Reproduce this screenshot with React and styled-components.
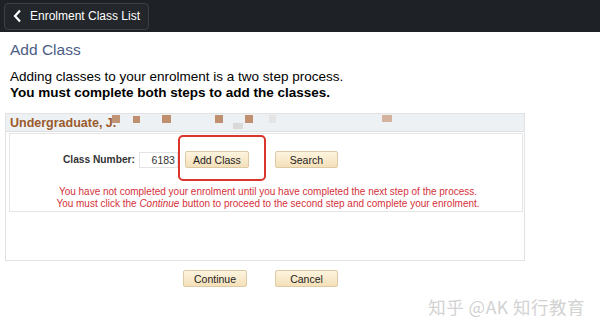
import React from "react";
import styled, { createGlobalStyle } from "styled-components";

const GlobalStyle = createGlobalStyle`
  body {
    margin: 0;
    background: #ffffff;
    font-family: "Liberation Sans", Arial, sans-serif;
  }
`;

const Page = styled.div`
  width: 600px;
  height: 332px;
  overflow: hidden;
  background: #fff;
`;

const TopBar = styled.div`
  height: 32px;
  background: #1e2226;
  display: flex;
  align-items: center;
  padding: 0 4px;
  box-sizing: border-box;
`;

const BackButton = styled.button`
  height: 27px;
  width: 145px;
  display: flex;
  align-items: center;
  gap: 8px;
  padding: 0 0 0 8px;
  background: #23272b;
  border: 1px solid #3c4146;
  border-radius: 4px;
  color: #fff;
  font-family: "Liberation Sans", Arial, sans-serif;
  font-size: 12px;
  white-space: nowrap;
`;

const Title = styled.h1`
  margin: 8px 0 0 10px;
  font-size: 15.5px;
  line-height: 20px;
  font-weight: normal;
  color: #4b5d86;
`;

const Intro = styled.p`
  margin: 9px 0 0 10px;
  font-size: 13.5px;
  line-height: 16px;
  color: #000;
`;

const Strong = styled.strong`
  display: block;
`;

const GroupBox = styled.div`
  margin: 12px 0 0 5px;
  width: 520px;
  height: 148px;
  border: 1px solid #e2e2e2;
  box-sizing: border-box;
`;

const GroupHeader = styled.div`
  position: relative;
  height: 18px;
  background: #eef1f3;
  border-bottom: 1px solid #dde0e2;
  box-sizing: border-box;
  padding-left: 4px;
  font-size: 12.5px;
  line-height: 18px;
  font-weight: bold;
  color: #9a5a2c;
`;

const Mosaic = styled.span`
  position: absolute;
  top: ${(p) => p.top}px;
  left: ${(p) => p.left}px;
  width: ${(p) => p.w}px;
  height: ${(p) => p.h}px;
  background: ${(p) => p.color};
`;

const InnerBox = styled.div`
  margin: 1px 1px 0 3px;
  height: 79px;
  border: 1px solid #e6e6e6;
  box-sizing: border-box;
  padding-top: 17px;
`;

const FormRow = styled.div`
  display: flex;
  align-items: center;
  height: 17px;
  padding-left: 53px;
`;

const Label = styled.span`
  font-size: 10.2px;
  font-weight: bold;
  color: #333;
  margin-right: 4px;
`;

const Input = styled.div`
  width: 39px;
  height: 16px;
  box-sizing: border-box;
  border: 1px solid #e4e4e4;
  font-size: 10.5px;
  line-height: 14px;
  text-align: right;
  padding-right: 2px;
  color: #333;
  margin-right: ${(p) => p.gap}px;
`;

const Highlight = styled.span`
  position: relative;
  display: inline-flex;
  margin-right: 26px;
  &::after {
    content: "";
    position: absolute;
    left: -7px;
    right: -17px;
    top: -16px;
    bottom: -13px;
    border: 2px solid #d9352c;
    border-radius: 5px;
  }
`;

const PsButton = styled.button`
  width: ${(p) => p.w || 64}px;
  height: 17px;
  padding: 0;
  background: linear-gradient(#fdf4df, #f4e0b9);
  border: 1px solid #dccaa4;
  border-radius: 2px;
  font-family: "Liberation Sans", Arial, sans-serif;
  font-size: 10.5px;
  color: #222;
`;

const Messages = styled.div`
  margin-top: 18px;
  text-align: center;
  font-size: 10px;
  line-height: 12px;
  color: #d5313a;
  padding-left: 4px;
`;

const Actions = styled.div`
  display: flex;
  gap: 28px;
  margin: 9px 0 0 183px;
`;

const Watermark = styled.div`
  margin: 9px 15px 0 0;
  text-align: right;
  font-family: "Noto Sans CJK SC", "Liberation Sans", sans-serif;
  font-size: 17.5px;
  line-height: 22px;
  color: #d2d2d2;
  letter-spacing: 0.5px;
`;

const Chevron = () => (
  <svg width="9" height="14" viewBox="0 0 9 14">
    <path d="M7 1.5 L2 7 L7 12.5" stroke="#fff" strokeWidth="2.2" fill="none" />
  </svg>
);

const mosaics = [
  { left: 106, top: 1, w: 8, h: 8, color: "#c29476" },
  { left: 127, top: 2, w: 7, h: 7, color: "#bf8f70" },
  { left: 156, top: 1, w: 9, h: 8, color: "#bf8f70" },
  { left: 209, top: 1, w: 8, h: 8, color: "#bf8f70" },
  { left: 239, top: 1, w: 8, h: 8, color: "#bf8f70" },
  { left: 263, top: 1, w: 7, h: 8, color: "#e4e4e4" },
  { left: 227, top: 9, w: 10, h: 6, color: "#d9d9d9" },
  { left: 376, top: 1, w: 10, h: 7, color: "#d4b39e" },
];

export default function App() {
  return (
    <Page>
      <GlobalStyle />
      <TopBar>
        <BackButton>
          <Chevron />
          Enrolment Class List
        </BackButton>
      </TopBar>
      <Title>Add Class</Title>
      <Intro>
        Adding classes to your enrolment is a two step process.
        <Strong>You must complete both steps to add the classes.</Strong>
      </Intro>
      <GroupBox>
        <GroupHeader>
          Undergraduate, J.
          {mosaics.map((m, i) => (
            <Mosaic key={i} {...m} />
          ))}
        </GroupHeader>
        <InnerBox>
          <FormRow>
            <Label>Class Number:</Label>
            <Input gap={7}>6183</Input>
            <Highlight>
              <PsButton>Add Class</PsButton>
            </Highlight>
            <PsButton w={63}>Search</PsButton>
          </FormRow>
          <Messages>
            You have not completed your enrolment until you have completed the next step of the process.
            <br />
            You must click the <i>Continue</i> button to proceed to the second step and complete your enrolment.
          </Messages>
        </InnerBox>
      </GroupBox>
      <Actions>
        <PsButton>Continue</PsButton>
        <PsButton w={63}>Cancel</PsButton>
      </Actions>
      <Watermark>知乎 @AK 知行教育</Watermark>
    </Page>
  );
}
